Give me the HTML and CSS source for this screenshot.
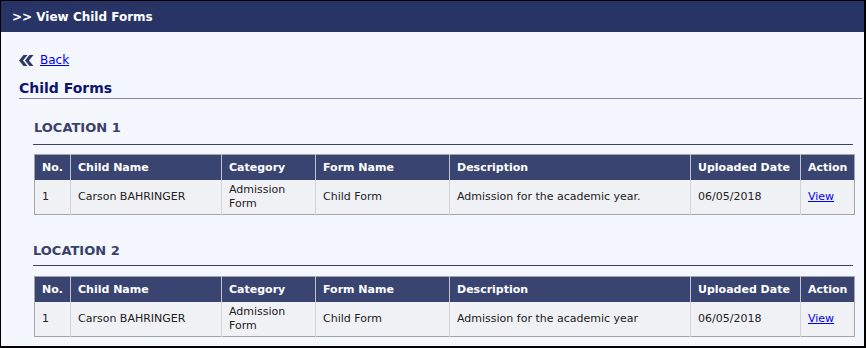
FILE: index.html
```html
<!DOCTYPE html>
<html lang="en">
<head>
    <meta charset="UTF-8">
    <title>View Child Forms</title>
    <link rel="stylesheet" href="styles.css">
</head>
<body>
    <div class="frame">
        <div class="topbar">&gt;&gt; View Child Forms</div>
        <div class="content">
            <div class="back">
                <svg class="back-icon" width="15" height="11" viewBox="0 0 15 11">
                    <path d="M4.5 0 L8.5 0 L4 5.5 L8.5 11 L4.5 11 L0 5.5 Z" fill="#2e3a63"/>
                    <path d="M10.5 0 L14.5 0 L10 5.5 L14.5 11 L10.5 11 L6 5.5 Z" fill="#2e3a63"/>
                </svg>
                <a href="#">Back</a>
            </div>
            <h2 class="page-title">Child Forms</h2>

            <div class="location">
                <h3>LOCATION 1</h3>
                <table class="forms">
                    <colgroup>
                        <col style="width:36px"><col style="width:151px"><col style="width:94px"><col style="width:134px">
                        <col style="width:241px"><col style="width:110px"><col style="width:54px">
                    </colgroup>
                    <tr>
                        <th>No.</th><th>Child Name</th><th>Category</th><th>Form Name</th>
                        <th>Description</th><th>Uploaded Date</th><th>Action</th>
                    </tr>
                    <tr>
                        <td>1</td><td>Carson BAHRINGER</td><td>Admission Form</td><td>Child Form</td>
                        <td>Admission for the academic year.</td><td>06/05/2018</td><td><a href="#">View</a></td>
                    </tr>
                </table>
            </div>

            <div class="location second">
                <h3>LOCATION 2</h3>
                <table class="forms">
                    <colgroup>
                        <col style="width:36px"><col style="width:151px"><col style="width:94px"><col style="width:134px">
                        <col style="width:241px"><col style="width:110px"><col style="width:54px">
                    </colgroup>
                    <tr>
                        <th>No.</th><th>Child Name</th><th>Category</th><th>Form Name</th>
                        <th>Description</th><th>Uploaded Date</th><th>Action</th>
                    </tr>
                    <tr>
                        <td>1</td><td>Carson BAHRINGER</td><td>Admission Form</td><td>Child Form</td>
                        <td>Admission for the academic year</td><td>06/05/2018</td><td><a href="#">View</a></td>
                    </tr>
                </table>
            </div>
        </div>
    </div>
</body>
</html>
```

FILE: styles.css
```css
body {
    margin: 0;
    font-family: "DejaVu Sans", Verdana, sans-serif;
    font-size: 11px;
    color: #222;
}

.frame {
    width: 866px;
    height: 348px;
    box-sizing: border-box;
    border: 1px solid #000;
    border-right-width: 2px;
    border-bottom-width: 2px;
    background-color: #f4f7fd;
    overflow: hidden;
}

.topbar {
    height: 31px;
    line-height: 33px;
    background-color: #283466;
    color: #fff;
    font-weight: bold;
    font-size: 12px;
    padding-left: 11px;
}

.content {
    padding: 0 2px 0 18px;
}

.back {
    display: flex;
    align-items: center;
    gap: 6px;
    margin-top: 21px;
    height: 14px;
    font-size: 12px;
}

a {
    color: #0000ee;
}

.page-title {
    margin: 13px 0 0;
    padding-bottom: 2px;
    font-size: 14px;
    color: #0c1470;
    border-bottom: 1px solid #8585b8;
}

.location {
    padding: 0 9px 0 14px;
}

.location h3 {
    margin: 21px 0 0;
    padding: 0 0 9px 1px;
    font-size: 13px;
    color: #3a426c;
    border-bottom: 1px solid #3a426c;
}

.location.second h3 {
    margin-top: 28px;
    padding: 0 0 7px 0;
}

.forms {
    border-collapse: collapse;
    margin: 9px 0 0 1px;
    table-layout: fixed;
    width: 821px;
    border: 1px solid #a3a3a8;
}

.location.second .forms {
    margin-top: 10px;
}

.forms th {
    background-color: #394570;
    color: #fff;
    text-align: left;
    white-space: nowrap;
    padding: 0 7px;
    height: 25px;
    border-left: 1px solid #bfc3d0;
    font-size: 11px;
}

.forms td {
    background-color: #f0f1f5;
    padding: 0 7px;
    height: 34px;
    border-left: 1px solid #d0d2d8;
    line-height: 14px;
}

.forms th:first-child,
.forms td:first-child {
    border-left: none;
}
```
